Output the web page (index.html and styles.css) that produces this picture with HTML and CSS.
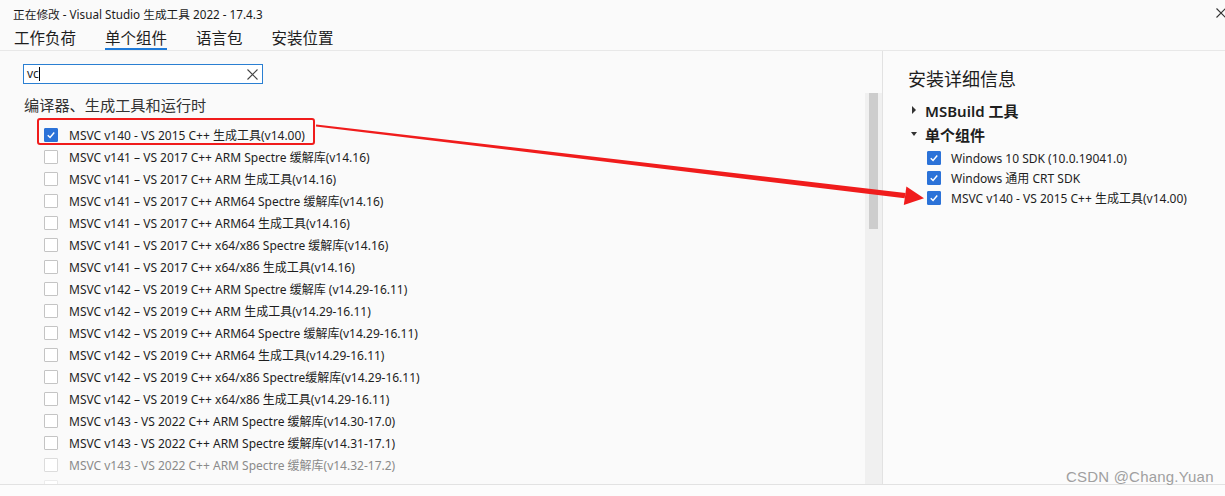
FILE: index.html
```html
<!DOCTYPE html>
<html lang="zh">
<head>
<meta charset="utf-8">
<title>Visual Studio Installer</title>
<link rel="stylesheet" href="styles.css">
</head>
<body>
<div class="app">
  <div class="titlebar">
    <span class="title">正在修改 - Visual Studio 生成工具 2022 - 17.4.3</span>
    <svg class="close" width="10" height="10" viewBox="0 0 10 10"><path d="M0.5 0.5L9.5 9.5M9.5 0.5L0.5 9.5" stroke="#333" stroke-width="1.1"/></svg>
  </div>
  <div class="tabs">
    <span class="tab">工作负荷</span>
    <span class="tab active">单个组件</span>
    <span class="tab">语言包</span>
    <span class="tab">安装位置</span>
  </div>
  <div class="main">
    <div class="left">
      <div class="content">
        <div class="search">
          <span class="query">vc</span><span class="caret"></span>
          <svg class="clear" width="11" height="11" viewBox="0 0 11 11"><path d="M0.5 0.5L10.5 10.5M10.5 0.5L0.5 10.5" stroke="#444" stroke-width="1.1"/></svg>
        </div>
        <div class="group-title">编译器、生成工具和运行时</div>
        <ul class="list">
          <li class="row"><span class="cb checked"><svg viewBox="0 0 14 14"><path d="M3.2 7.2L5.9 9.8L10.8 4.2" fill="none" stroke="#fff" stroke-width="1.7"/></svg></span>MSVC v140 - VS 2015 C++ 生成工具(v14.00)</li>
          <li class="row"><span class="cb"></span>MSVC v141 – VS 2017 C++ ARM Spectre 缓解库(v14.16)</li>
          <li class="row"><span class="cb"></span>MSVC v141 – VS 2017 C++ ARM 生成工具(v14.16)</li>
          <li class="row"><span class="cb"></span>MSVC v141 – VS 2017 C++ ARM64 Spectre 缓解库(v14.16)</li>
          <li class="row"><span class="cb"></span>MSVC v141 – VS 2017 C++ ARM64 生成工具(v14.16)</li>
          <li class="row"><span class="cb"></span>MSVC v141 – VS 2017 C++ x64/x86 Spectre 缓解库(v14.16)</li>
          <li class="row"><span class="cb"></span>MSVC v141 – VS 2017 C++ x64/x86 生成工具(v14.16)</li>
          <li class="row"><span class="cb"></span>MSVC v142 – VS 2019 C++ ARM Spectre 缓解库 (v14.29-16.11)</li>
          <li class="row"><span class="cb"></span>MSVC v142 – VS 2019 C++ ARM 生成工具(v14.29-16.11)</li>
          <li class="row"><span class="cb"></span>MSVC v142 – VS 2019 C++ ARM64 Spectre 缓解库(v14.29-16.11)</li>
          <li class="row"><span class="cb"></span>MSVC v142 – VS 2019 C++ ARM64 生成工具(v14.29-16.11)</li>
          <li class="row"><span class="cb"></span>MSVC v142 – VS 2019 C++ x64/x86 Spectre缓解库(v14.29-16.11)</li>
          <li class="row"><span class="cb"></span>MSVC v142 – VS 2019 C++ x64/x86 生成工具(v14.29-16.11)</li>
          <li class="row"><span class="cb"></span>MSVC v143 - VS 2022 C++ ARM Spectre 缓解库(v14.30-17.0)</li>
          <li class="row"><span class="cb"></span>MSVC v143 - VS 2022 C++ ARM Spectre 缓解库(v14.31-17.1)</li>
          <li class="row faded"><span class="cb"></span>MSVC v143 - VS 2022 C++ ARM Spectre 缓解库(v14.32-17.2)</li>
          <li class="row faded2"><span class="cb"></span></li>
        </ul>
      </div>
      <div class="scrollbar"><div class="thumb"></div></div>
    </div>
    <div class="right">
      <div class="details-title">安装详细信息</div>
      <div class="node"><span class="tri-right"></span>MSBuild 工具</div>
      <div class="node"><span class="tri-down"></span>单个组件</div>
      <ul class="sel-list">
        <li class="sel"><span class="cb checked"><svg viewBox="0 0 14 14"><path d="M3.2 7.2L5.9 9.8L10.8 4.2" fill="none" stroke="#fff" stroke-width="1.7"/></svg></span>Windows 10 SDK (10.0.19041.0)</li>
        <li class="sel"><span class="cb checked"><svg viewBox="0 0 14 14"><path d="M3.2 7.2L5.9 9.8L10.8 4.2" fill="none" stroke="#fff" stroke-width="1.7"/></svg></span>Windows 通用 CRT SDK</li>
        <li class="sel"><span class="cb checked"><svg viewBox="0 0 14 14"><path d="M3.2 7.2L5.9 9.8L10.8 4.2" fill="none" stroke="#fff" stroke-width="1.7"/></svg></span>MSVC v140 - VS 2015 C++ 生成工具(v14.00)</li>
      </ul>
    </div>
  </div>
  <div class="bottombar"></div>
</div>
<div class="highlight"></div>
<svg class="arrow" width="1225" height="496" viewBox="0 0 1225 496">
  <polygon points="316.1,124.6 905.6,192.9 904.6,198.3 315.9,126.4" fill="#f01c1c"/>
  <polygon points="924,198.2 903.8,205 906.4,186.5" fill="#f01c1c"/>
</svg>
<div class="watermark">CSDN @Chang.Yuan</div>
</body>
</html>
```

FILE: styles.css
```css
* { box-sizing: border-box; }
html, body {
  margin: 0;
  padding: 0;
  width: 1225px;
  height: 496px;
  overflow: hidden;
  background: #fafafa;
  font-family: "Noto Sans", "Noto Sans CJK SC", sans-serif;
  color: #1e1e1e;
}
ul { list-style: none; margin: 0; padding: 0; }

.app {
  display: flex;
  flex-direction: column;
  height: 496px;
}

.titlebar {
  height: 26px;
  display: flex;
  align-items: center;
  justify-content: space-between;
  padding-left: 13px;
  font-size: 11.7px;
  color: #1a1a1a;
}
.titlebar .close { position: relative; left: 1px; }

.tabs {
  height: 25px;
  display: flex;
  gap: 29px;
  padding-left: 14px;
  border-bottom: 1px solid #e8e8e8;
  font-size: 15.5px;
}
.tab {
  line-height: 20px;
  height: 24px;
  padding-top: 1px;
  font-family: "Noto Sans CJK SC", sans-serif;
}
.tab.active { border-bottom: 2px solid #1e7ad8; }

.main {
  height: 433px;
  display: flex;
  overflow: hidden;
}

.left {
  width: 883px;
  display: flex;
  border-right: 1px solid #e2e2e2;
}
.content {
  flex: 1;
  padding-left: 23px;
  padding-top: 13px;
  overflow: hidden;
}
.search {
  width: 240px;
  height: 20px;
  border: 1px solid #2a7fd2;
  background: #fff;
  display: flex;
  align-items: center;
  padding-left: 3px;
  font-size: 12px;
}
.search .query { line-height: 16px; }
.search .caret { width: 1px; height: 14px; background: #000; }
.search .clear { margin-left: auto; margin-right: 4px; }

.group-title {
  margin-top: 10px;
  line-height: 20px;
  font-size: 15.2px;
  font-family: "Noto Sans CJK SC", sans-serif;
  color: #333;
  padding-left: 1px;
}
.list { margin-top: 10px; padding-left: 21px; }
.row {
  height: 22px;
  display: flex;
  align-items: center;
  font-size: 12px;
  white-space: nowrap;
  color: #1e1e1e;
}
.row.faded { color: #8a8a8a; }
.row.faded .cb { border-color: #dcdcdc; }
.row.faded2 .cb { border-color: #ececec; }

.cb {
  width: 14px;
  height: 14px;
  border: 1px solid #c4c4c4;
  background: #fff;
  border-radius: 1px;
  margin-right: 11px;
  flex: none;
  display: flex;
}
.cb.checked {
  background: #2b72d8;
  border-color: #2b72d8;
}
.cb svg { width: 12px; height: 12px; }

.scrollbar {
  width: 17px;
  margin-top: 42px;
  background: #f0f0f0;
  padding-left: 4px;
}
.thumb {
  width: 9px;
  height: 136px;
  background: #cdcdcd;
}

.right {
  flex: 1;
  padding-left: 25px;
  padding-top: 15px;
  background: #fbfbfb;
}
.details-title {
  font-size: 18px;
  line-height: 24px;
  font-family: "Noto Sans CJK SC", sans-serif;
  color: #1e1e1e;
}
.node {
  margin-top: 8px;
  height: 24px;
  display: flex;
  align-items: center;
  font-size: 15px;
  font-weight: 600;
  color: #1e1e1e;
}
.node + .node { margin-top: 0; }
.tri-right {
  width: 0; height: 0;
  border-top: 4px solid transparent;
  border-bottom: 4px solid transparent;
  border-left: 4px solid #333;
  margin-left: 4px;
  margin-right: 9px;
}
.tri-down {
  width: 0; height: 0;
  border-left: 3.5px solid transparent;
  border-right: 3.5px solid transparent;
  border-top: 4px solid #333;
  margin-left: 3px;
  margin-right: 8px;
}
.sel-list { margin-top: 2px; padding-left: 19px; }
.sel {
  height: 20px;
  display: flex;
  align-items: center;
  font-size: 12px;
  white-space: nowrap;
}
.sel .cb { margin-right: 10px; }

.bottombar {
  flex: 1;
  border-top: 1px solid #e2e2e2;
  background: #fcfcfc;
}

.highlight {
  position: absolute;
  left: 37px;
  top: 118px;
  width: 278px;
  height: 27px;
  border: 2px solid #f01c1c;
  border-radius: 3px;
}
.arrow {
  position: absolute;
  left: 0;
  top: 0;
  pointer-events: none;
}
.watermark {
  position: absolute;
  left: 1066px;
  top: 468px;
  font-family: "Liberation Sans", sans-serif;
  font-size: 15px;
  color: #a0a0a0;
  letter-spacing: 0.2px;
}
```
